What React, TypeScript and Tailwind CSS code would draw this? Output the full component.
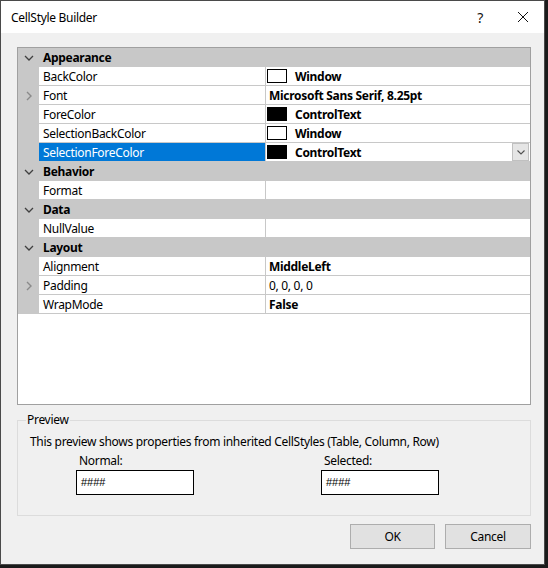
import React from "react";

const F = "font-['Segoe_UI','Noto_Sans',sans-serif] tracking-[-0.3px]";

function ChevDown({ className = "" }: { className?: string }) {
  return (
    <svg width="10" height="6" viewBox="0 0 10 6" className={className}>
      <path d="M1 1 L5 5 L9 1" fill="none" stroke="#404040" strokeWidth="1.3" />
    </svg>
  );
}

function ChevRight() {
  return (
    <svg width="6" height="10" viewBox="0 0 6 10">
      <path d="M1 1 L5 5 L1 9" fill="none" stroke="#8a8a8a" strokeWidth="1.4" />
    </svg>
  );
}

function Category({ name }: { name: string }) {
  return (
    <div className="flex h-[19px] bg-[#c8c8c8]">
      <div className="w-[21px] flex items-center justify-center pl-[1px]">
        <ChevDown />
      </div>
      <div className="pl-[4px] pt-[1px] flex items-center text-[12px] font-bold text-black">{name}</div>
    </div>
  );
}

type RowProps = {
  name: string;
  value?: string;
  expandable?: boolean;
  selected?: boolean;
  swatch?: "white" | "black";
  bold?: boolean;
  dropdown?: boolean;
};

function Row({ name, value, expandable, selected, swatch, bold, dropdown }: RowProps) {
  return (
    <div className="flex h-[19px]">
      <div className="w-[21px] bg-[#c8c8c8] flex items-center justify-center pl-[1px]">
        {expandable && <ChevRight />}
      </div>
      <div
        className={`w-[227px] border-b border-r border-[#c8c8c8] pl-[4px] pt-[1px] flex items-center text-[12px] ${
          selected ? "bg-[#0078d7] text-white" : "bg-white text-black"
        }`}
      >
        {name}
      </div>
      <div className="flex-1 bg-white border-b border-[#c8c8c8] flex items-center text-[12px] text-black">
        {swatch ? (
          <>
            <div
              className={`ml-[1px] w-[20px] h-[14px] border border-black ${
                swatch === "black" ? "bg-black" : "bg-white"
              }`}
            />
            <span className="ml-[8px] pt-[1px] font-bold">{value}</span>
          </>
        ) : (
          <span className={`pl-[3px] pt-[1px] ${bold ? "font-bold" : ""}`}>{value}</span>
        )}
        {dropdown && (
          <div className="ml-auto mr-[1px] w-[17px] h-[18px] bg-[#e5e5e5] border border-[#c0c0c0] flex items-center justify-center">
            <svg width="8" height="5" viewBox="0 0 8 5">
              <path d="M0.5 0.5 L4 4 L7.5 0.5" fill="none" stroke="#505050" strokeWidth="1.1" />
            </svg>
          </div>
        )}
      </div>
    </div>
  );
}

export default function App() {
  return (
    <div className={`w-[548px] h-[568px] bg-[#1b1b1b] overflow-hidden ${F}`}>
      <div className="w-[545px] h-[565px] border border-[#4a4a4a] bg-[#f0f0f0] flex flex-col">
        {/* Title bar */}
        <div className="h-[32px] bg-white flex items-center text-black">
          <span className="pl-[10px] pt-[1px] text-[12px]">CellStyle Builder</span>
          <span className="ml-auto text-[14px] mr-[34px] text-[#111]">?</span>
          <svg width="12" height="12" viewBox="0 0 12 12" className="mr-[15px]">
            <path d="M1 1 L11 11 M11 1 L1 11" stroke="#111" strokeWidth="1" />
          </svg>
        </div>

        {/* Body */}
        <div className="flex-1 pl-[16px] pt-[14px] flex flex-col">
          {/* Property grid */}
          <div className="w-[514px] h-[358px] border border-[#a0a0a0] bg-white flex flex-col">
            <Category name="Appearance" />
            <Row name="BackColor" swatch="white" value="Window" />
            <Row name="Font" expandable value="Microsoft Sans Serif, 8.25pt" bold />
            <Row name="ForeColor" swatch="black" value="ControlText" />
            <Row name="SelectionBackColor" swatch="white" value="Window" />
            <Row name="SelectionForeColor" swatch="black" value="ControlText" selected dropdown />
            <Category name="Behavior" />
            <Row name="Format" value="" />
            <Category name="Data" />
            <Row name="NullValue" value="" />
            <Category name="Layout" />
            <Row name="Alignment" value="MiddleLeft" bold />
            <Row name="Padding" expandable value="0, 0, 0, 0" />
            <Row name="WrapMode" value="False" bold />
            <div className="flex-1 bg-white" />
          </div>

          {/* Preview group */}
          <fieldset className="mt-[7px] w-[514px] h-[104px] border border-[#dcdcdc] px-0 text-[12px] text-black">
            <legend className="ml-[8px] px-[1px] leading-[16px]">Preview</legend>
            <div className="pl-[12px] pt-[6px] leading-[16px]">
              This preview shows properties from inherited CellStyles (Table, Column, Row)
            </div>
            <div className="flex pt-[3px]">
              <div className="ml-[58px] flex flex-col">
                <span className="pl-[3px] leading-[16px]">Normal:</span>
                <div className="mt-[1px] w-[118px] h-[25px] border border-black bg-white flex items-center pl-[4px] text-[11px] tracking-normal font-['Liberation_Sans',sans-serif]">
                  ####
                </div>
              </div>
              <div className="ml-[127px] flex flex-col">
                <span className="pl-[3px] leading-[16px]">Selected:</span>
                <div className="mt-[1px] w-[118px] h-[25px] border border-black bg-white flex items-center pl-[4px] text-[11px] tracking-normal font-['Liberation_Sans',sans-serif]">
                  ####
                </div>
              </div>
            </div>
          </fieldset>

          {/* Buttons */}
          <div className="w-[514px] mt-[8px] flex justify-end gap-[10px]">
            <button className="w-[85px] h-[25px] bg-[#e1e1e1] border border-[#adadad] text-[12px] text-black">
              OK
            </button>
            <button className="w-[86px] h-[25px] bg-[#e1e1e1] border border-[#adadad] text-[12px] text-black">
              Cancel
            </button>
          </div>
        </div>
      </div>
    </div>
  );
}
